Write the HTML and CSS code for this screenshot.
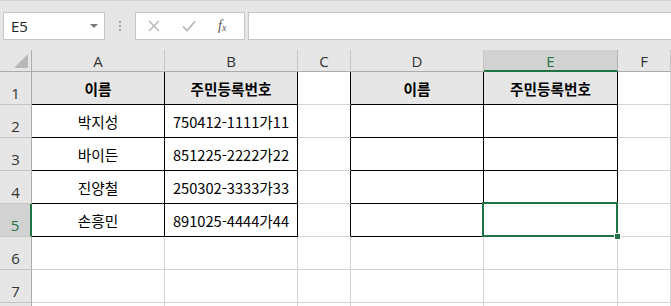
FILE: index.html
```html
<!DOCTYPE html>
<html lang="ko">
<head>
<meta charset="utf-8">
<title>Sheet</title>
<link rel="stylesheet" href="styles.css">
</head>
<body>
<div class="toolbar">
  <div class="namebox"><span class="ref">E5</span><span class="drop"></span></div>
  <div class="dots"><i></i><i></i><i></i></div>
  <div class="fbtns">
    <svg class="ic" width="12" height="12" viewBox="0 0 12 12"><path d="M1 1L11 11M11 1L1 11" stroke="#b4b4b4" stroke-width="1.3" fill="none"/></svg>
    <svg class="ic" width="14" height="12" viewBox="0 0 14 12"><path d="M1 6.5L5 10.5L13 1.5" stroke="#b4b4b4" stroke-width="1.6" fill="none"/></svg>
    <span class="fx">f<sub>x</sub></span>
  </div>
  <div class="finput"></div>
</div>
<div class="sheet">
  <div class="corner"><span class="tri"></span></div>
  <div class="ch">A</div><div class="ch">B</div><div class="ch">C</div><div class="ch">D</div><div class="ch sel">E</div><div class="ch">F</div>

  <div class="rh">1</div>
  <div class="c hd tb">이름</div><div class="c hd tb">주민등록번호</div><div class="c tl"></div><div class="c hd tb">이름</div><div class="c hd tb">주민등록번호</div><div class="c"></div>

  <div class="rh">2</div>
  <div class="c tb">박지성</div><div class="c tb">750412-1111가11</div><div class="c tl"></div><div class="c tb"></div><div class="c tb"></div><div class="c"></div>

  <div class="rh">3</div>
  <div class="c tb">바이든</div><div class="c tb">851225-2222가22</div><div class="c tl"></div><div class="c tb"></div><div class="c tb"></div><div class="c"></div>

  <div class="rh">4</div>
  <div class="c tb">진양철</div><div class="c tb">250302-3333가33</div><div class="c tl"></div><div class="c tb"></div><div class="c tb"></div><div class="c"></div>

  <div class="rh rsel">5</div>
  <div class="c tb">손흥민</div><div class="c tb">891025-4444가44</div><div class="c tl"></div><div class="c tb"></div><div class="c tb active"><span class="selbox"></span><span class="handle"></span></div><div class="c"></div>

  <div class="rh">6</div>
  <div class="c"></div><div class="c"></div><div class="c"></div><div class="c"></div><div class="c"></div><div class="c"></div>

  <div class="rh">7</div>
  <div class="c"></div><div class="c"></div><div class="c"></div><div class="c"></div><div class="c"></div><div class="c"></div>

  <div class="rh"></div>
  <div class="c"></div><div class="c"></div><div class="c"></div><div class="c"></div><div class="c"></div><div class="c"></div>
</div>
</body>
</html>
```
FILE: styles.css
```css
* { box-sizing: border-box; }
html, body { margin: 0; padding: 0; }
body {
  width: 671px;
  height: 306px;
  overflow: hidden;
  background: #fff;
  font-family: "Noto Sans CJK KR", "Noto Sans", sans-serif;
}
.toolbar {
  height: 50px;
  background: #e6e6e6;
  border-top: 1px solid #d2d2d2;
  display: flex;
  align-items: flex-start;
  padding-top: 11px;
  padding-left: 3px;
}
.namebox {
  width: 102px;
  height: 28px;
  background: #fff;
  border: 1px solid #c6c6c6;
  display: flex;
  align-items: center;
  justify-content: space-between;
  padding: 0 6px 0 7px;
}
.ref {
  font-family: "Open Sans", "Noto Sans", sans-serif;
  font-size: 15px;
  color: #222;
}
.drop {
  width: 0; height: 0;
  border-left: 4px solid transparent;
  border-right: 4px solid transparent;
  border-top: 4px solid #7a7a7a;
}
.dots {
  width: 30px;
  height: 28px;
  display: flex;
  flex-direction: column;
  align-items: center;
  justify-content: center;
  gap: 2px;
}
.dots i {
  display: block;
  width: 2px;
  height: 2px;
  background: #a6a6a6;
}
.fbtns {
  width: 110px;
  height: 28px;
  background: #fff;
  border: 1px solid #c6c6c6;
  display: flex;
  align-items: center;
  padding-left: 12px;
}
.fbtns .ic:nth-child(1) { margin-right: 22px; }
.fbtns .ic:nth-child(2) { margin-right: 22px; }
.fx {
  font-family: "Liberation Serif", serif;
  font-style: italic;
  font-size: 14px;
  color: #555;
}
.fx sub { font-size: 10px; vertical-align: -1px; }
.finput {
  flex: 1;
  margin-left: 3px;
  height: 28px;
  background: #fff;
  border: 1px solid #c6c6c6;
  border-right: none;
}
.sheet {
  display: grid;
  grid-template-columns: 32px 133px 133px 53px 133px 134px 1fr;
  grid-template-rows: 22px repeat(7, 33px) 4px;
}
.corner {
  background: #e6e6e6;
  border-right: 1px solid #ababab;
  border-bottom: 1px solid #ababab;
  position: relative;
}
.tri {
  position: absolute;
  right: 3px;
  bottom: 3px;
  width: 0; height: 0;
  border-left: 14px solid transparent;
  border-bottom: 14px solid #b7b7b7;
}
.ch {
  background: #e6e6e6;
  border-right: 1px solid #c4c4c4;
  border-bottom: 1px solid #ababab;
  display: flex;
  align-items: center;
  justify-content: center;
  font-family: "Open Sans", "Noto Sans", sans-serif;
  font-size: 15px;
  color: #333;
  padding-top: 1px;
}
.ch.sel {
  background: #d2d2d2;
  border-right-color: #b0b0b0;
  border-bottom: 2px solid #217346;
  color: #217346;
}
.rh {
  background: #e6e6e6;
  border-right: 1px solid #ababab;
  border-bottom: 1px solid #c4c4c4;
  display: flex;
  align-items: flex-end;
  justify-content: center;
  font-family: "Open Sans", "Noto Sans", sans-serif;
  font-size: 15px;
  color: #333;
  padding-bottom: 1px;
}
.rh.rsel {
  background: #d2d2d2;
  border-right: 2px solid #217346;
  color: #217346;
}
.c {
  border-right: 1px solid #d4d4d4;
  border-bottom: 1px solid #d4d4d4;
  display: flex;
  align-items: center;
  justify-content: center;
  font-size: 14.67px;
  color: #000;
  white-space: nowrap;
}
.c.tb { border-right-color: #000; border-bottom-color: #000; }
.c.tl { border-right-color: #000; }
.c.hd { background: #e7e6e6; font-weight: bold; }
.c.active { position: relative; }
.selbox {
  position: absolute;
  left: -2px;
  top: -2px;
  right: -1px;
  bottom: -1px;
  border: 2px solid #217346;
}
.handle {
  position: absolute;
  right: -4px;
  bottom: -4px;
  width: 7px;
  height: 7px;
  background: #217346;
  border: 1px solid #fff;
}
```
